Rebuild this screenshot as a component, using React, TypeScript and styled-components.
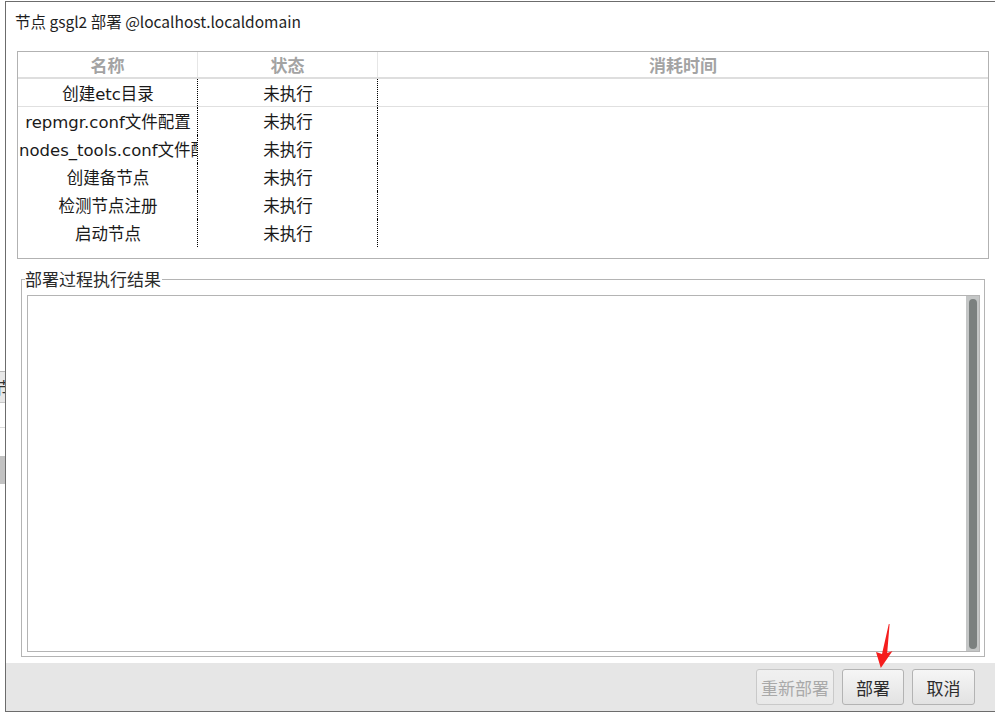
import React from "react";
import styled, { createGlobalStyle } from "styled-components";

const GlobalStyle = createGlobalStyle`
  html, body { margin: 0; padding: 0; background: #ffffff; }
  body { width: 995px; height: 712px; overflow: hidden; font-family: "Noto Sans CJK SC", "DejaVu Sans", sans-serif; }
  * { box-sizing: border-box; }
`;

const Page = styled.div`
  position: relative;
  display: flex;
  width: 995px;
  height: 712px;
  padding-top: 1px;
  overflow: hidden;
  background: #ffffff;
`;

const Strip = styled.div`
  width: 5px;
  flex-shrink: 0;
  display: flex;
  flex-direction: column;
`;

const StripTab = styled.div`
  margin-top: 370px;
  height: 32px;
  background: #e8e8e8;
  border-top: 1px solid #b8b8b8;
  border-bottom: 1px solid #c8c8c8;
  display: flex;
  justify-content: flex-end;
  align-items: center;
  overflow: hidden;
  font-size: 16px;
  color: #333;
  & > span { flex-shrink: 0; margin-right: -4px; }
`;

const StripLine = styled.div`
  margin-top: 24px;
  height: 1px;
  background: #dcdcdc;
`;

const StripBlock = styled.div`
  margin-top: 28px;
  height: 28px;
  background: #c2c2c2;
`;

const Window = styled.div`
  width: 994px;
  height: 711px;
  flex-shrink: 0;
  border: 1px solid #6c6c6c;
  display: flex;
  flex-direction: column;
  background: #ffffff;
`;

const Title = styled.div`
  height: 38px;
  line-height: 38px;
  padding-left: 9px;
  font-size: 15.5px;
  color: #1e1e1e;
  font-family: "Noto Sans CJK SC", sans-serif;
`;

const Table = styled.div`
  margin: 11px 9px 0 11px;
  height: 208px;
  border: 1px solid #b2b2b2;
  display: flex;
  flex-direction: column;
`;

const HeaderRow = styled.div`
  display: grid;
  grid-template-columns: 180px 180px 1fr;
  height: 27px;
  border-bottom: 2px solid #dedede;
`;

const HeaderCell = styled.div<{ $last?: boolean }>`
  display: flex;
  align-items: center;
  justify-content: center;
  font-size: 17px;
  font-weight: bold;
  color: #a3a3a3;
  font-family: "Noto Sans CJK SC", sans-serif;
  border-right: ${(p) => (p.$last ? "none" : "1px solid #e6e6e6")};
`;

const Row = styled.div<{ $current?: boolean }>`
  display: grid;
  grid-template-columns: 180px 180px 1fr;
  height: 28px;
  border-bottom: ${(p) => (p.$current ? "1px solid #e0e0e0" : "none")};
`;

const Cell = styled.div<{ $last?: boolean }>`
  text-align: center;
  overflow: hidden;
  white-space: nowrap;
  padding-left: 1px;
  line-height: 32px;
  font-size: 16.5px;
  color: #1a1a1a;
  font-family: "DejaVu Sans", "Noto Sans CJK SC", sans-serif;
  border-right: ${(p) => (p.$last ? "none" : "1px dotted #000")};
`;

const Group = styled.div`
  position: relative;
  margin: 20px 13px 0 15px;
  height: 378px;
  border: 1px solid #b4b4b4;
  padding: 15px 4px 4px 5px;
  display: flex;
`;

const Legend = styled.div`
  position: absolute;
  top: -12px;
  left: 3px;
  padding: 0 1px 0 0;
  background: #ffffff;
  font-size: 17px;
  line-height: 22px;
  color: #2a2a2a;
  font-family: "Noto Sans CJK SC", sans-serif;
`;

const Output = styled.div`
  flex: 1;
  border: 1px solid #b4b4b4;
  display: flex;
  background: #ffffff;
`;

const OutputBody = styled.div`
  flex: 1;
`;

const ScrollTrack = styled.div`
  width: 13px;
  background: #c4c6c6;
  padding: 3px 2px 2px 3px;
  display: flex;
`;

const ScrollThumb = styled.div`
  flex: 1;
  background: #7b807f;
  border-radius: 4px;
`;

const Footer = styled.div`
  margin-top: 6px;
  height: 48px;
  background: #e6e6e6;
  display: flex;
  justify-content: flex-end;
  align-items: flex-start;
  gap: 8px;
  padding: 6px 23px 0 0;
`;

const Button = styled.button<{ $w: number }>`
  width: ${(p) => p.$w}px;
  height: 36px;
  border-radius: 3px;
  border: 1px solid ${(p) => (p.disabled ? "#c9c9c9" : "#b3b3b3")};
  background: ${(p) =>
    p.disabled ? "linear-gradient(#f0f0f0, #e8e8e8)" : "linear-gradient(#f6f6f6, #e2e2e2)"};
  color: ${(p) => (p.disabled ? "#a9a9a9" : "#2c2c2c")};
  font-size: 17px;
  font-family: "Noto Sans CJK SC", sans-serif;
  padding: 0;
  display: flex;
  align-items: center;
  justify-content: center;
`;

const Arrow = styled.svg`
  position: absolute;
  left: 870px;
  top: 620px;
  width: 30px;
  height: 52px;
`;

const rows = [
  "创建etc目录",
  "repmgr.conf文件配置",
  "nodes_tools.conf文件配置",
  "创建备节点",
  "检测节点注册",
  "启动节点",
];

export default function App() {
  return (
    <>
      <GlobalStyle />
      <Page>
        <Strip>
          <StripTab>
            <span>节</span>
          </StripTab>
          <StripLine />
          <StripBlock />
        </Strip>
        <Window>
          <Title>节点 gsgl2 部署 @localhost.localdomain</Title>
          <Table>
            <HeaderRow>
              <HeaderCell>名称</HeaderCell>
              <HeaderCell>状态</HeaderCell>
              <HeaderCell $last>消耗时间</HeaderCell>
            </HeaderRow>
            {rows.map((name, i) => (
              <Row key={name} $current={i === 0}>
                <Cell>{name}</Cell>
                <Cell>未执行</Cell>
                <Cell $last />
              </Row>
            ))}
          </Table>
          <Group>
            <Legend>部署过程执行结果</Legend>
            <Output>
              <OutputBody />
              <ScrollTrack>
                <ScrollThumb />
              </ScrollTrack>
            </Output>
          </Group>
          <Footer>
            <Button $w={78} disabled>
              重新部署
            </Button>
            <Button $w={62}>部署</Button>
            <Button $w={63}>取消</Button>
          </Footer>
        </Window>
        <Arrow viewBox="0 0 30 52">
          <polygon
            points="19.6,4 17.2,33 22.5,31 10.8,48 6,32 12,34 18.8,4"
            fill="#f51d1d"
          />
        </Arrow>
      </Page>
    </>
  );
}
